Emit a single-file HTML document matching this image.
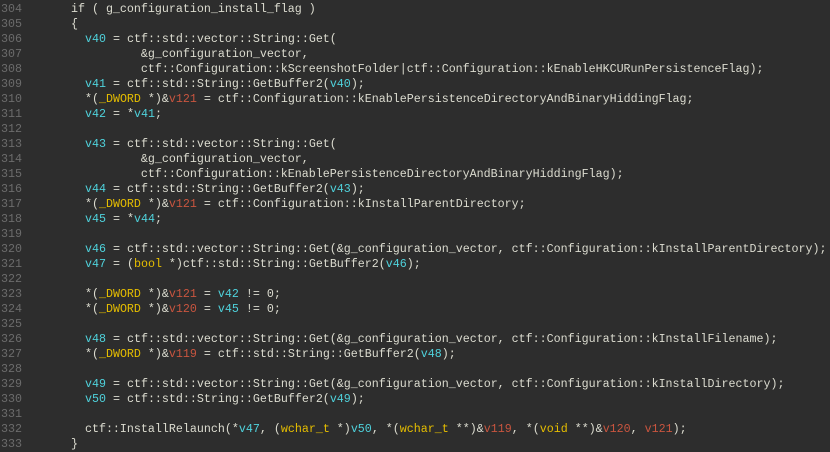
<!DOCTYPE html>
<html><head><meta charset="utf-8"><style>
html,body{margin:0;padding:0;background:#2d2d2d;width:830px;height:440px;overflow:hidden}
pre{margin:0;position:absolute;left:1px;top:2px;font-family:"Liberation Mono",monospace;font-size:11.67px;line-height:15px;color:#dcdcd0;white-space:pre}
.n{color:#6c6c6c}
.v{color:#4fd2dc}
.t{color:#e6be00}
.r{color:#c9553f}
</style></head><body><pre>
<span class="n">304</span>       if ( g_configuration_install_flag )
<span class="n">305</span>       {
<span class="n">306</span>         <span class="v">v40</span> = ctf::std::vector::String::Get(
<span class="n">307</span>                 &amp;g_configuration_vector,
<span class="n">308</span>                 ctf::Configuration::kScreenshotFolder|ctf::Configuration::kEnableHKCURunPersistenceFlag);
<span class="n">309</span>         <span class="v">v41</span> = ctf::std::String::GetBuffer2(<span class="v">v40</span>);
<span class="n">310</span>         *(<span class="t">_DWORD</span> *)&amp;<span class="r">v121</span> = ctf::Configuration::kEnablePersistenceDirectoryAndBinaryHiddingFlag;
<span class="n">311</span>         <span class="v">v42</span> = *<span class="v">v41</span>;
<span class="n">312</span>
<span class="n">313</span>         <span class="v">v43</span> = ctf::std::vector::String::Get(
<span class="n">314</span>                 &amp;g_configuration_vector,
<span class="n">315</span>                 ctf::Configuration::kEnablePersistenceDirectoryAndBinaryHiddingFlag);
<span class="n">316</span>         <span class="v">v44</span> = ctf::std::String::GetBuffer2(<span class="v">v43</span>);
<span class="n">317</span>         *(<span class="t">_DWORD</span> *)&amp;<span class="r">v121</span> = ctf::Configuration::kInstallParentDirectory;
<span class="n">318</span>         <span class="v">v45</span> = *<span class="v">v44</span>;
<span class="n">319</span>
<span class="n">320</span>         <span class="v">v46</span> = ctf::std::vector::String::Get(&amp;g_configuration_vector, ctf::Configuration::kInstallParentDirectory);
<span class="n">321</span>         <span class="v">v47</span> = (<span class="t">bool</span> *)ctf::std::String::GetBuffer2(<span class="v">v46</span>);
<span class="n">322</span>
<span class="n">323</span>         *(<span class="t">_DWORD</span> *)&amp;<span class="r">v121</span> = <span class="v">v42</span> != 0;
<span class="n">324</span>         *(<span class="t">_DWORD</span> *)&amp;<span class="r">v120</span> = <span class="v">v45</span> != 0;
<span class="n">325</span>
<span class="n">326</span>         <span class="v">v48</span> = ctf::std::vector::String::Get(&amp;g_configuration_vector, ctf::Configuration::kInstallFilename);
<span class="n">327</span>         *(<span class="t">_DWORD</span> *)&amp;<span class="r">v119</span> = ctf::std::String::GetBuffer2(<span class="v">v48</span>);
<span class="n">328</span>
<span class="n">329</span>         <span class="v">v49</span> = ctf::std::vector::String::Get(&amp;g_configuration_vector, ctf::Configuration::kInstallDirectory);
<span class="n">330</span>         <span class="v">v50</span> = ctf::std::String::GetBuffer2(<span class="v">v49</span>);
<span class="n">331</span>
<span class="n">332</span>         ctf::InstallRelaunch(*<span class="v">v47</span>, (<span class="t">wchar_t</span> *)<span class="v">v50</span>, *(<span class="t">wchar_t</span> **)&amp;<span class="r">v119</span>, *(<span class="t">void</span> **)&amp;<span class="r">v120</span>, <span class="r">v121</span>);
<span class="n">333</span>       }
</pre></body></html>
